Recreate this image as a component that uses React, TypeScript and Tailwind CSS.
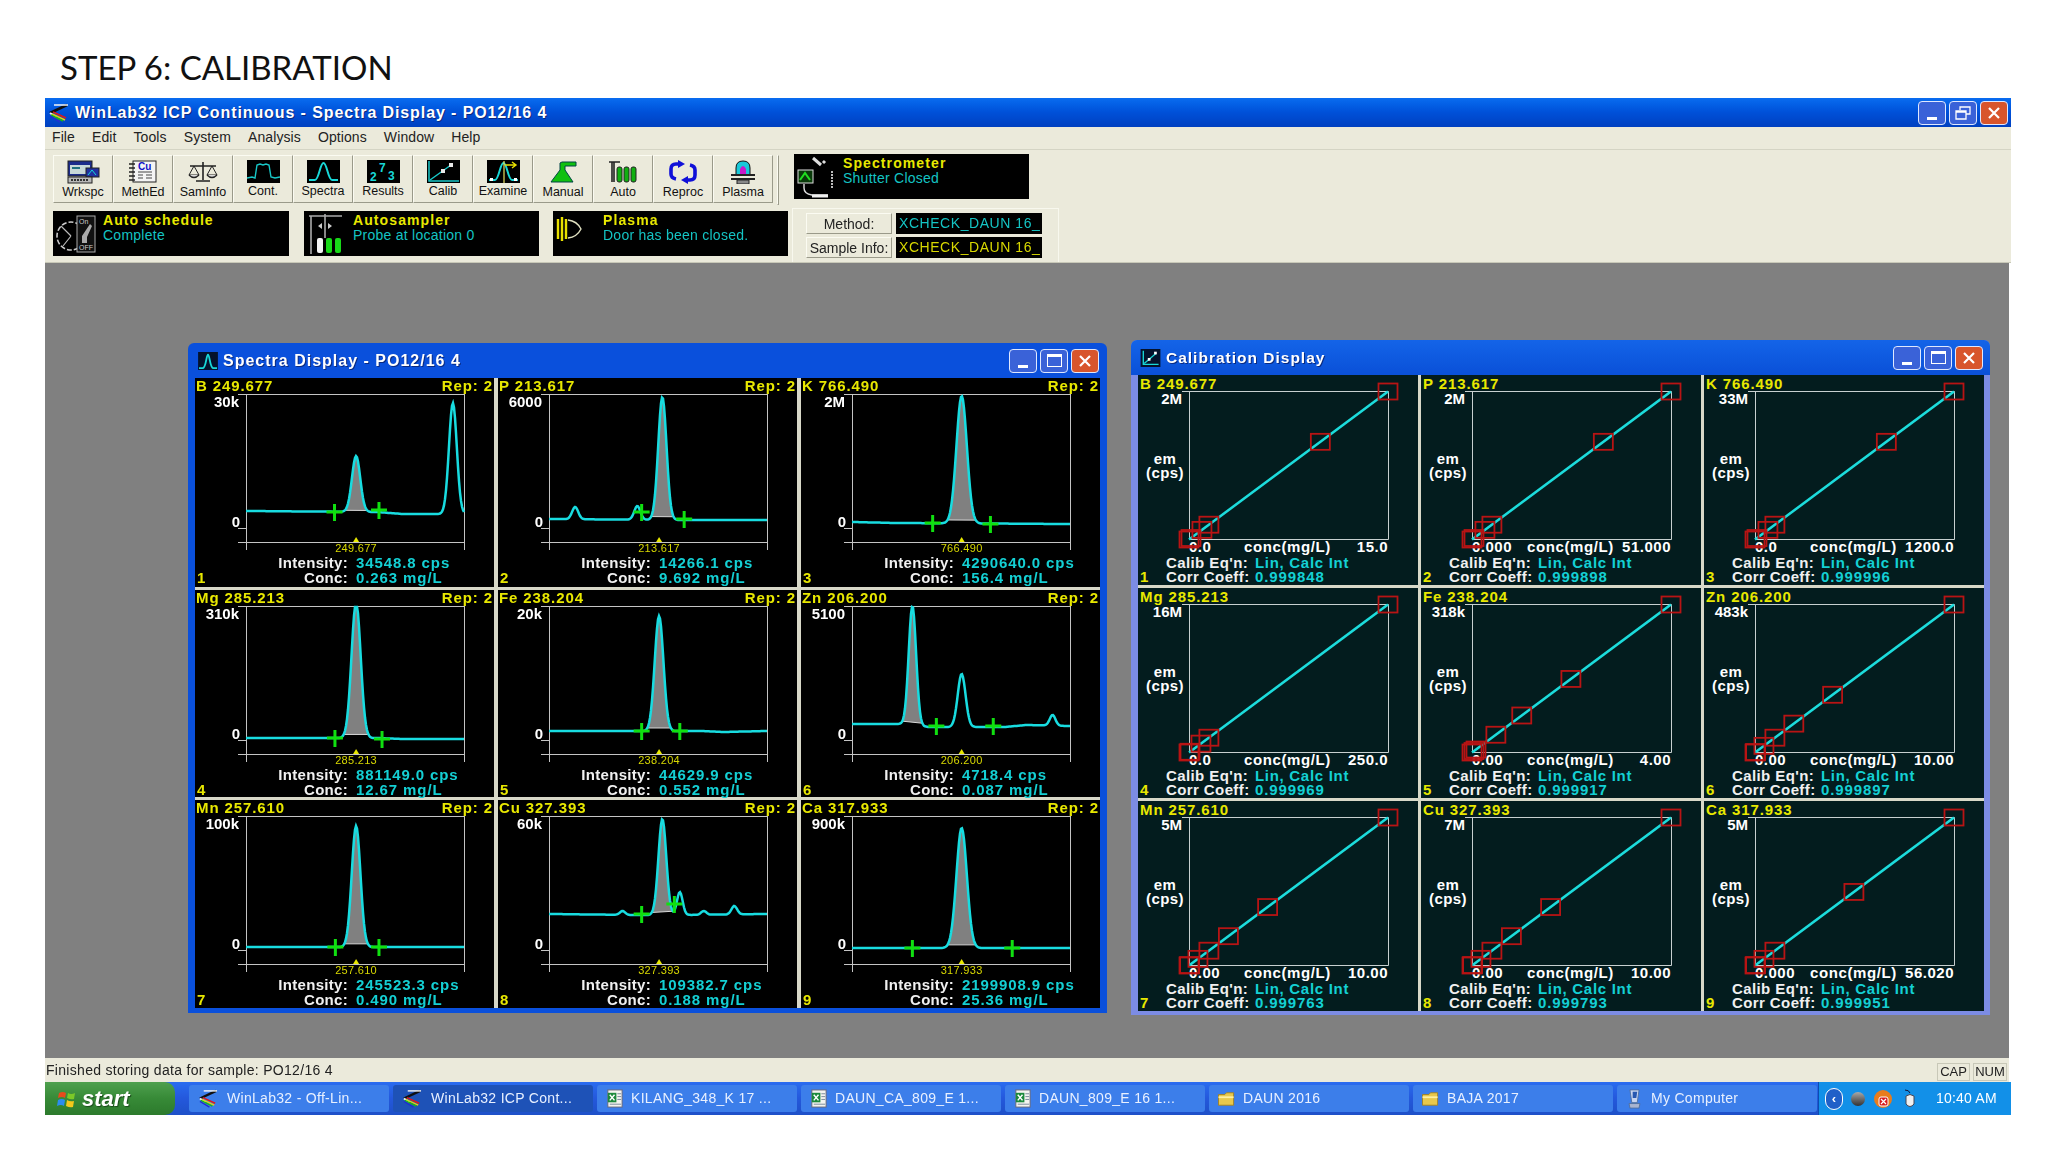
import type { ReactNode } from "react";

type Peak = [number, number, number];

type Spectrum = {
  name: string;
  num: number;
  top: string;
  wave: string;
  intensity: string;
  conc: string;
  mark: number;
  stops: [number, number][];
  peaks: Peak[];
  marks: [number, number][];
};

type Calib = {
  name: string;
  num: number;
  top: string;
  lo: string;
  hi: string;
  corr: string;
  points: number[];
};

const spectra: Spectrum[] = [
  { name: "B 249.677", num: 1, top: "30k", wave: "249.677", intensity: "34548.8 cps", conc: "0.263 mg/L", mark: 0.505, stops: [[0, 117], [0.6, 118], [0.72, 120], [0.9, 120], [1, 120]], peaks: [[0.505, 62, 0.019], [0.949, 9, 0.018]], marks: [[0.406, 118], [0.61, 116]] },
  { name: "P 213.617", num: 2, top: "6000", wave: "213.617", intensity: "14266.1 cps", conc: "9.692 mg/L", mark: 0.505, stops: [[0, 125], [0.6, 126], [1, 126]], peaks: [[0.52, 3, 0.019], [0.12, 113, 0.014], [0.405, 112, 0.014]], marks: [[0.425, 118], [0.62, 125]] },
  { name: "K 766.490", num: 3, top: "2M", wave: "766.490", intensity: "4290640.0 cps", conc: "156.4 mg/L", mark: 0.503, stops: [[0, 128], [0.2, 129], [1, 130]], peaks: [[0.503, 2, 0.024]], marks: [[0.37, 129], [0.635, 130]] },
  { name: "Mg 285.213", num: 4, top: "310k", wave: "285.213", intensity: "881149.0 cps", conc: "12.67 mg/L", mark: 0.505, stops: [[0, 132], [0.6, 132], [0.72, 133], [1, 133]], peaks: [[0.505, -4, 0.021]], marks: [[0.408, 132], [0.624, 133]] },
  { name: "Fe 238.204", num: 5, top: "20k", wave: "238.204", intensity: "44629.9 cps", conc: "0.552 mg/L", mark: 0.505, stops: [[0, 125], [0.7, 125], [0.8, 126], [1, 125]], peaks: [[0.505, 10, 0.02]], marks: [[0.425, 125], [0.6, 125]] },
  { name: "Zn 206.200", num: 6, top: "5100", wave: "206.200", intensity: "4718.4 cps", conc: "0.087 mg/L", mark: 0.503, stops: [[0, 118], [0.22, 118], [0.35, 121], [0.7, 121], [0.8, 119], [1, 120]], peaks: [[0.277, 0, 0.017], [0.503, 68, 0.018], [0.92, 109, 0.013]], marks: [[0.387, 120], [0.648, 120]] },
  { name: "Mn 257.610", num: 7, top: "100k", wave: "257.610", intensity: "245523.3 cps", conc: "0.490 mg/L", mark: 0.505, stops: [[0, 131], [1, 131]], peaks: [[0.505, 10, 0.02]], marks: [[0.41, 131], [0.61, 131]] },
  { name: "Cu 327.393", num: 8, top: "60k", wave: "327.393", intensity: "109382.7 cps", conc: "0.188 mg/L", mark: 0.505, stops: [[0, 98], [0.4, 99], [0.6, 99], [1, 98]], peaks: [[0.52, 3, 0.018], [0.6, 76, 0.013], [0.337, 95, 0.012], [0.71, 95, 0.012], [0.85, 90, 0.013]], marks: [[0.425, 98], [0.575, 88]] },
  { name: "Ca 317.933", num: 9, top: "900k", wave: "317.933", intensity: "2199908.9 cps", conc: "25.36 mg/L", mark: 0.503, stops: [[0, 132], [1, 132]], peaks: [[0.503, 12, 0.024]], marks: [[0.277, 132], [0.735, 132]] },
];

const calibrations: Calib[] = [
  { name: "B 249.677", num: 1, top: "2M", lo: "0.0", hi: "15.0", corr: "0.999848", points: [0, 0.01, 0.065, 0.1, 0.66, 1] },
  { name: "P 213.617", num: 2, top: "2M", lo: "0.000", hi: "51.000", corr: "0.999898", points: [0, 0.01, 0.065, 0.1, 0.66, 1] },
  { name: "K 766.490", num: 3, top: "33M", lo: "0.0", hi: "1200.0", corr: "0.999996", points: [0, 0.01, 0.065, 0.1, 0.66, 1] },
  { name: "Mg 285.213", num: 4, top: "16M", lo: "0.0", hi: "250.0", corr: "0.999969", points: [0, 0.005, 0.06, 0.1, 1] },
  { name: "Fe 238.204", num: 5, top: "318k", lo: "0.00", hi: "4.00", corr: "0.999917", points: [0, 0.01, 0.02, 0.12, 0.25, 0.497, 1] },
  { name: "Zn 206.200", num: 6, top: "483k", lo: "0.00", hi: "10.00", corr: "0.999897", points: [0, 0.003, 0.045, 0.1, 0.195, 0.39, 1] },
  { name: "Mn 257.610", num: 7, top: "5M", lo: "0.00", hi: "10.00", corr: "0.999763", points: [0, 0.003, 0.045, 0.1, 0.198, 0.395, 1] },
  { name: "Cu 327.393", num: 8, top: "7M", lo: "0.00", hi: "10.00", corr: "0.999793", points: [0, 0.003, 0.045, 0.1, 0.198, 0.395, 1] },
  { name: "Ca 317.933", num: 9, top: "5M", lo: "0.000", hi: "56.020", corr: "0.999951", points: [0, 0.003, 0.045, 0.1, 0.497, 1] },
];

const menus = ["File", "Edit", "Tools", "System", "Analysis", "Options", "Window", "Help"];

const raised = "border border-t-[#fbfbf2] border-l-[#fbfbf2] border-r-[#9a9a8a] border-b-[#9a9a8a]";

function WinLabLogo({ className }: { className?: string }) {
  return (
    <svg viewBox="0 0 24 20" className={className}>
      <path d="M3 10 L20 2" stroke="#101010" strokeWidth="2.5" fill="none" />
      <path d="M7 2 H21" stroke="#f4f4f4" strokeWidth="1.5" />
      <path d="M3 10 L9 14" stroke="#f4f4f4" strokeWidth="2" />
      <path d="M6 9 L19 15" stroke="#e01818" strokeWidth="1.5" />
      <path d="M5 11 L18 17" stroke="#e8d010" strokeWidth="1.5" />
      <path d="M4 12 L16 18" stroke="#18b818" strokeWidth="1.5" />
      <path d="M3 13 L13 19" stroke="#2030d0" strokeWidth="1.5" />
    </svg>
  );
}

function BlackIcon({ children }: { children: ReactNode }) {
  return (
    <svg viewBox="0 0 33 23" className="h-[23px] w-[33px]">
      <rect width="33" height="23" fill="#000" />
      {children}
    </svg>
  );
}

function SpectraGlyph() {
  return <path d="M2 20 H8 C12 20 13 3 16.5 3 C20 3 21 20 25 20 H31" stroke="#18d8d8" strokeWidth="2" fill="none" />;
}

function toolIcon(label: string): ReactNode {
  switch (label) {
    case "Wrkspc":
      return (
        <svg viewBox="0 0 34 24" className="h-6 w-[34px]">
          <rect x="2" y="1" width="24" height="15" fill="#1c2c8c" stroke="#222" />
          <rect x="4" y="5" width="20" height="9" fill="#c8d8d8" />
          <rect x="6" y="7" width="8" height="2" fill="#207080" />
          <rect x="20" y="8" width="13" height="9" fill="#2030a0" stroke="#222" />
          <path d="M22 15 L26 10 L30 15" stroke="#18d8d8" fill="none" />
          <rect x="2" y="17" width="24" height="6" fill="#b8b8b8" stroke="#222" />
          <path d="M5 20 H22" stroke="#333" strokeWidth="2" strokeDasharray="2 1" />
        </svg>
      );
    case "MethEd":
      return (
        <svg viewBox="0 0 34 24" className="h-6 w-[34px]">
          <rect x="7" y="1" width="23" height="21" fill="#f4f4f4" stroke="#222" />
          <path d="M3 4 H9 M3 8 H9 M3 12 H9 M3 16 H9 M3 20 H9" stroke="#222" strokeWidth="1.6" />
          <text x="12" y="10" className="fill-[#1010c8] text-[10px] font-bold">Cu</text>
          <path d="M12 12 H26 M12 15 H17 M20 15 H26 M12 18 H17 M20 18 H26" stroke="#444" strokeWidth="1.2" />
        </svg>
      );
    case "SamInfo":
      return (
        <svg viewBox="0 0 34 24" className="h-6 w-[34px]">
          <path d="M4 6 H30 M17 2 V20 M10 21 H24" stroke="#222" strokeWidth="1.6" fill="none" />
          <path d="M8 6 L3 15 H13 Z M26 6 L21 15 H31 Z" stroke="#222" fill="none" />
          <path d="M3 15 Q8 20 13 15 M21 15 Q26 20 31 15" stroke="#222" strokeWidth="1.4" fill="#ddd" />
        </svg>
      );
    case "Cont.":
      return (
        <BlackIcon>
          <path d="M0 18 L5 17 L8 18 L10 5 L13 4 L16 5 L19 4 L22 5 L24 17 L28 18 L33 17" stroke="#18c8c8" strokeWidth="1.4" fill="none" />
        </BlackIcon>
      );
    case "Spectra":
      return <BlackIcon><SpectraGlyph /></BlackIcon>;
    case "Results":
      return (
        <BlackIcon>
          <text x="3" y="21" className="fill-[#18d8d8] text-[12px] font-bold">2</text>
          <text x="12" y="12" className="fill-[#18d8d8] text-[12px] font-bold">7</text>
          <text x="21" y="20" className="fill-[#18d8d8] text-[12px] font-bold">3</text>
        </BlackIcon>
      );
    case "Calib":
      return (
        <BlackIcon>
          <path d="M2 1 V21 H32" stroke="#18c8c8" strokeWidth="1.5" fill="none" />
          <path d="M3 20 L24 5" stroke="#18c8c8" strokeWidth="1.5" />
          <rect x="14" y="9" width="4" height="4" fill="#e8e8e8" />
          <rect x="22" y="3" width="4" height="4" fill="#e8e8e8" />
        </BlackIcon>
      );
    case "Examine":
      return (
        <BlackIcon>
          <SpectraGlyph />
          <path d="M17 1 V23" stroke="#e8e060" strokeWidth="1.2" />
          <path d="M18 5 H28 M25 2 L29 5 L25 8" stroke="#e8e000" strokeWidth="1.4" fill="none" />
          <rect x="3" y="18" width="3" height="3" fill="#fff" />
          <rect x="27" y="18" width="3" height="3" fill="#fff" />
        </BlackIcon>
      );
    case "Manual":
      return (
        <svg viewBox="0 0 34 24" className="h-6 w-[34px]">
          <path d="M14 3 V10 L5 22 H27 L19 10 V6 H30 V2 H16 Z" fill="#10c010" stroke="#044" strokeWidth="1" />
        </svg>
      );
    case "Auto":
      return (
        <svg viewBox="0 0 34 24" className="h-6 w-[34px]">
          <path d="M3 2 H14 M6 2 V22 M8 2 V22" stroke="#222" strokeWidth="1.6" />
          <rect x="11" y="7" width="5" height="15" rx="2" fill="#10b010" stroke="#222" />
          <rect x="18" y="7" width="5" height="15" rx="2" fill="#10b010" stroke="#222" />
          <rect x="25" y="7" width="5" height="15" rx="2" fill="#10b010" stroke="#222" />
        </svg>
      );
    case "Reproc":
      return (
        <svg viewBox="0 0 34 24" className="h-6 w-[34px]">
          <path d="M13 4 H10 Q5 4 5 9 V14 Q5 18 10 19" stroke="#1010d8" strokeWidth="3.6" fill="none" />
          <path d="M21 20 H24 Q29 20 29 15 V10 Q29 6 24 5" stroke="#1010d8" strokeWidth="3.6" fill="none" />
          <path d="M12 0 L19 4 L12 8 Z M22 16 L15 20 L22 24 Z" fill="#1010d8" />
        </svg>
      );
    default:
      return (
        <svg viewBox="0 0 34 24" className="h-6 w-[34px]">
          <path d="M10 15 V8 Q10 1 17 1 Q24 1 24 8 V15 Z" fill="#18c8d8" stroke="#111" />
          <path d="M14 15 V9 Q17 3 20 9 V15 Z" fill="#c818c8" />
          <path d="M5 15 H29 M5 19 H29" stroke="#222" strokeWidth="2" />
          <rect x="11" y="20" width="12" height="4" fill="#888" stroke="#222" />
        </svg>
      );
  }
}

function ToolButton({ label }: { label: string }) {
  return (
    <div className={`flex h-12 w-[60px] flex-col items-center justify-start bg-[#ebeadb] pt-[4px] ${raised}`}>
      {toolIcon(label)}
      <span className="text-[12.5px] leading-[17px] text-[#111]">{label}</span>
    </div>
  );
}

function StatusPanel({ width, textLeft, icon, title, sub }: { width: string; textLeft: string; icon: ReactNode; title: string; sub: string }) {
  return (
    <div className={`flex h-[45px] shrink-0 bg-black pt-[1px] ${width}`}>
      <div className={`shrink-0 pl-[2px] ${textLeft}`}>{icon}</div>
      <div className="flex flex-col">
        <span className="text-[14px] font-bold leading-[16px] tracking-[1.1px] text-[#e8e800]">{title}</span>
        <span className="text-[14px] leading-[14px] tracking-[0.25px] text-[#14c4c4]">{sub}</span>
      </div>
    </div>
  );
}

function SchedIcon() {
  return (
    <svg viewBox="0 0 42 42" className="h-[42px] w-[42px]">
      <circle cx="16" cy="24" r="14" stroke="#ccc" strokeWidth="1.6" fill="none" strokeDasharray="5 2" />
      <path d="M16 24 L6 14 M16 24 L8 34" stroke="#bbb" strokeWidth="1.2" />
      <rect x="22" y="4" width="18" height="36" fill="#111" stroke="#aaa" />
      <path d="M27 24 L35 12 L37 14 L32 25 V31 H27 Z" fill="#aaa" />
      <text x="24" y="12" className="fill-[#ccc] text-[7px]">On</text>
      <text x="24" y="38" className="fill-[#ccc] text-[7px]">OFF</text>
    </svg>
  );
}

function SamplerIcon() {
  return (
    <svg viewBox="0 0 40 42" className="h-[42px] w-[40px]">
      <path d="M3 4 H36 M5 4 V42 M19 2 V26" stroke="#aaa" strokeWidth="1.6" />
      <path d="M12 14 L16 11 V17 Z M26 14 L22 11 V17 Z" fill="#ccc" />
      <rect x="11" y="26" width="6" height="15" rx="2" fill="#f2f2f2" />
      <rect x="20" y="26" width="6" height="15" rx="2" fill="#18d818" />
      <rect x="29" y="26" width="6" height="15" rx="2" fill="#18d818" />
    </svg>
  );
}

function PlasmaIcon() {
  return (
    <svg viewBox="0 0 30 30" className="mt-[2px] h-[30px] w-[30px]">
      <path d="M3 5 V25 M7 3 V27 M11 5 V25" stroke="#e8e000" strokeWidth="2.4" />
      <path d="M13 6 Q22 7 26 15 Q22 23 13 24" stroke="#e0e0c0" strokeWidth="1.4" fill="none" />
    </svg>
  );
}

function SpecIcon() {
  return (
    <svg viewBox="0 0 44 44" className="h-[44px] w-[44px]">
      <path d="M17 3 L25 10 M29 6 L27 8" stroke="#ddd" strokeWidth="3" />
      <rect x="2" y="15" width="15" height="13" fill="#0a3a0a" stroke="#ddd" />
      <path d="M4 25 L9 18 L14 25" stroke="#20e020" strokeWidth="2" fill="none" />
      <path d="M36 16 V34" stroke="#bbb" strokeWidth="2" strokeDasharray="2 1" />
      <path d="M8 29 V33 Q8 39 16 40 H32" stroke="#ddd" strokeWidth="1.4" fill="none" />
      <path d="M16 41 H32" stroke="#f0f0f0" strokeWidth="3" />
    </svg>
  );
}

function WindowButtons({ restore, className }: { restore?: boolean; className?: string }) {
  const btn = "flex h-6 w-7 items-center justify-center rounded-[4px] border border-[#dfe8ff]";
  return (
    <div className={`flex gap-[3px] ${className ?? ""}`}>
      <div className={`${btn} items-end bg-[#3a62d8] pb-[4px]`}>
        <div className="h-[3px] w-[10px] bg-white" />
      </div>
      <div className={`${btn} bg-[#3a62d8]`}>
        {restore ? (
          <svg viewBox="0 0 16 14" className="h-[14px] w-4">
            <path d="M5 4 V1 H15 V8 H11 M1 5 H11 V13 H1 Z M1 6 H11" stroke="#fff" strokeWidth="1.3" fill="none" />
          </svg>
        ) : (
          <div className="h-[13px] w-[15px] border border-t-[3px] border-white" />
        )}
      </div>
      <div className={`${btn} bg-[#d8552c]`}>
        <svg viewBox="0 0 14 14" className="h-[14px] w-[14px]">
          <path d="M2 2 L12 12 M12 2 L2 12" stroke="#fff" strokeWidth="2.2" />
        </svg>
      </div>
    </div>
  );
}

function SpectrumChart({ s }: { s: Spectrum }) {
  const left = 51;
  const width = 218;
  const baseAt = (f: number) => {
    for (let i = 1; i < s.stops.length; i++) {
      const [a, ya] = s.stops[i - 1];
      const [b, yb] = s.stops[i];
      if (f <= b) return ya + ((yb - ya) * (f - a)) / (b - a);
    }
    return s.stops[s.stops.length - 1][1];
  };
  const curveAt = (f: number) => {
    const base = baseAt(f);
    let y = base;
    for (const [mu, top, sigma] of s.peaks) {
      y -= (base - top) * Math.exp(-((f - mu) ** 2) / (2 * sigma * sigma));
    }
    return Math.max(1, y);
  };
  const pts: string[] = [];
  for (let i = 0; i <= width; i++) pts.push(`${left + i},${curveAt(i / width).toFixed(1)}`);

  const [mu, , sigma] = s.peaks[0];
  const from = mu - 2.7 * sigma;
  const to = mu + 2.7 * sigma;
  const fill: string[] = [];
  for (let f = from; f <= to; f += 0.004) fill.push(`${left + f * width},${curveAt(f).toFixed(1)}`);
  const x0 = left + from * width;
  const x1 = left + to * width;
  const y0 = curveAt(from);
  const y1 = curveAt(to);
  const markX = left + s.mark * width;

  return (
    <svg width="299" height="160" className="block overflow-visible">
      <path d={`M43 0.5 H269.5 M51.5 0 V156 M269.5 0 V156 M43 148.5 H269.5 M43 134.5 H51`} stroke="#c4c4c4" strokeWidth="1" fill="none" />
      <polygon points={`${x0},${y0} ${fill.join(" ")} ${x1},${y1}`} fill="#808080" />
      <path d={`M${x0} ${y0} L${x1} ${y1}`} stroke="#d8d8d8" strokeWidth="1" />
      <polyline points={pts.join(" ")} stroke="#18dce0" strokeWidth="2.5" fill="none" />
      {s.marks.map(([f, y]) => {
        const x = left + f * width;
        return <path key={f} d={`M${x - 8} ${y} H${x + 8} M${x} ${y - 8} V${y + 9}`} stroke="#10e010" strokeWidth="3" />;
      })}
      <path d={`M${markX - 3} 148 L${markX} 143 L${markX + 3} 148 Z`} fill="#e8e800" />
      <text x="44" y="13" textAnchor="end" className="fill-white text-[15px] font-bold">{s.top}</text>
      <text x="45" y="133" textAnchor="end" className="fill-white text-[15px] font-bold">0</text>
      <text x={markX} y="158" textAnchor="middle" className="fill-[#d8d800] text-[11px] tracking-[0.3px]">{s.wave}</text>
    </svg>
  );
}

function SpectrumCell({ s }: { s: Spectrum }) {
  return (
    <div className="flex min-w-0 flex-col bg-black">
      <div className="flex h-4 items-center justify-between px-[1px] text-[15px] font-bold leading-[18px] tracking-[0.9px] text-[#e8e800]">
        <span>{s.name}</span>
        <span>Rep: 2</span>
      </div>
      <SpectrumChart s={s} />
      <div className="grid grid-cols-[153px_auto] gap-x-2 pt-[1px] text-[15px] font-bold leading-[15px]">
        <span className="text-right tracking-[0.3px] text-[#f0f0f0]">Intensity:</span>
        <span className="tracking-[0.9px] text-[#14d0d4]">{s.intensity}</span>
        <span className="flex justify-between tracking-[0.3px] text-[#f0f0f0]">
          <span className="pl-[2px] text-[#e8e800]">{s.num}</span>
          <span>Conc:</span>
        </span>
        <span className="tracking-[0.9px] text-[#14d0d4]">{s.conc}</span>
      </div>
    </div>
  );
}

function CalibrationChart({ c }: { c: Calib }) {
  const left = 51;
  const right = 250;
  const top = 0.5;
  const bottom = 148.5;
  return (
    <svg width="280" height="164" className="block overflow-visible">
      <path d={`M44 ${top} H${right + 0.5} V${bottom} H${left + 0.5} V${top}`} stroke="#c8d0d0" strokeWidth="1" fill="none" />
      <path d={`M${left} ${bottom} L${right} ${top}`} stroke="#1cdcdc" strokeWidth="2.6" />
      <text x="44" y="13" textAnchor="end" className="fill-white text-[15px] font-bold">{c.top}</text>
      <text x="27" y="73" textAnchor="middle" className="fill-white text-[15px] font-bold tracking-[0.4px]">em</text>
      <text x="27" y="87" textAnchor="middle" className="fill-white text-[15px] font-bold tracking-[0.4px]">(cps)</text>
      <text x={left} y="161" className="fill-white text-[15px] font-bold tracking-[0.5px]">{c.lo}</text>
      <text x="106" y="161" className="fill-white text-[15px] font-bold tracking-[0.6px]">conc(mg/L)</text>
      <text x={right} y="161" textAnchor="end" className="fill-white text-[15px] font-bold tracking-[0.5px]">{c.hi}</text>
      {c.points.map((t) => {
        const cx = left + t * (right - left);
        const cy = bottom - t * (bottom - top);
        return <rect key={t} x={cx - 9.5} y={cy - 8} width="19" height="16" fill="none" stroke="#b81414" strokeWidth="1.8" />;
      })}
    </svg>
  );
}

function CalibrationCell({ c }: { c: Calib }) {
  return (
    <div className="flex min-w-0 flex-col bg-[#031c1e]">
      <div className="h-4 pl-[2px] text-[15px] font-bold leading-[18px] tracking-[0.9px] text-[#e8e800]">{c.name}</div>
      <CalibrationChart c={c} />
      <div className="grid grid-cols-[117px_auto] whitespace-nowrap pt-[1px] text-[15px] font-bold leading-[14px]">
        <span className="pl-7 tracking-[0.4px] text-[#f0f0f0]">Calib Eq'n:</span>
        <span className="tracking-[0.7px] text-[#14d0d4]">Lin, Calc Int</span>
        <span className="relative pl-7 tracking-[0.4px] text-[#f0f0f0]">
          <span className="absolute left-[2px] text-[#e8e800]">{c.num}</span>
          Corr Coeff:
        </span>
        <span className="tracking-[0.9px] text-[#14d0d4]">{c.corr}</span>
      </div>
    </div>
  );
}

function TaskIcon({ kind }: { kind: string }) {
  if (kind === "lab") return <WinLabLogo className="h-[19px] w-[23px] shrink-0" />;
  if (kind === "xls") {
    return (
      <svg viewBox="0 0 20 20" className="h-[19px] w-[19px] shrink-0">
        <rect x="3" y="1" width="15" height="18" fill="#f4f4f0" stroke="#667" />
        <rect x="3" y="4" width="9" height="10" fill="#1c8a3c" />
        <path d="M5 6 L10 12 M10 6 L5 12" stroke="#fff" strokeWidth="1.5" />
        <path d="M13 5 H17 M13 8 H17 M13 11 H17 M5 16 H17" stroke="#789" />
      </svg>
    );
  }
  if (kind === "dir") {
    return (
      <svg viewBox="0 0 20 18" className="h-4 w-[19px] shrink-0">
        <path d="M1 4 H8 L10 2 H18 V16 H1 Z" fill="#e8c84c" stroke="#a08020" />
        <path d="M1 7 H18" stroke="#fff0a0" strokeWidth="2" />
      </svg>
    );
  }
  return (
    <svg viewBox="0 0 20 22" className="h-5 w-[19px] shrink-0">
      <path d="M5 1 H15 L13 15 H7 Z" fill="#c8d4f0" stroke="#5070a0" />
      <path d="M8 3 H13 L12 10 H8 Z" fill="#2858b0" />
      <path d="M4 16 H16 L15 21 H5 Z" fill="#a8b4d0" stroke="#5070a0" />
    </svg>
  );
}

function TaskButton({ kind, label, active }: { kind: string; label: string; active?: boolean }) {
  return (
    <div className={`flex h-[27px] w-[200px] shrink-0 items-center gap-[7px] rounded-[3px] pl-2 text-[14px] tracking-[0.3px] text-[#e8f0ff] ${active ? "bg-[#1e52b7]" : "bg-[#3c7eea]"}`}>
      <TaskIcon kind={kind} />
      <span className="whitespace-nowrap">{label}</span>
    </div>
  );
}

export default function App() {
  return (
    <div className="h-[1152px] w-[2048px] overflow-hidden bg-white [font-family:'Liberation_Sans',Arial,sans-serif]">
      <h1 className="h-[98px] pl-[60px] pt-[45px] text-[33px] font-normal leading-[44px] text-[#111] [font-family:Lato,sans-serif]">
        STEP 6: CALIBRATION
      </h1>

      <div className="ml-[45px] flex w-[1966px] flex-col [filter:blur(0.35px)]">
        {/* main title bar */}
        <div className="flex h-[29px] items-center justify-between bg-gradient-to-b from-[#0a6cf0] via-[#0050d8] to-[#0040c0] pl-[2px] pr-[3px]">
          <div className="flex items-center gap-[4px]">
            <WinLabLogo className="h-5 w-6" />
            <span className="text-[16px] font-bold tracking-[0.9px] text-white [text-shadow:1px_1px_0_#0a2a80]">
              WinLab32 ICP Continuous - Spectra Display - PO12/16 4
            </span>
          </div>
          <WindowButtons restore />
        </div>

        {/* menu */}
        <div className="flex h-[23px] items-center gap-[17px] border-b border-[#d4d4c4] bg-[#ebeadb] pb-[2px] pl-[7px] text-[14px] tracking-[0.1px] text-[#222]">
          {menus.map((m) => (
            <span key={m}>{m}</span>
          ))}
        </div>

        {/* toolbar */}
        <div className="flex h-[58px] items-start bg-[#ebeadb] pl-2 pt-[5px]">
          {["Wrkspc", "MethEd", "SamInfo", "Cont.", "Spectra", "Results", "Calib", "Examine", "Manual", "Auto", "Reproc", "Plasma"].map((t) => (
            <ToolButton key={t} label={t} />
          ))}
          <div className={`ml-[4px] h-[50px] w-[2px] ${raised}`} />
          <div className="-mt-[1px] ml-[15px]">
            <StatusPanel width="w-[235px]" textLeft="w-[49px]" icon={<SpecIcon />} title="Spectrometer" sub="Shutter Closed" />
          </div>
        </div>

        {/* second row */}
        <div className="flex h-[55px] items-start border-b border-[#c8c8b8] bg-[#ebeadb] pl-2 pt-[3px]">
          <StatusPanel width="w-[236px]" textLeft="w-[50px]" icon={<SchedIcon />} title="Auto schedule" sub="Complete" />
          <div className="ml-[15px]">
            <StatusPanel width="w-[235px]" textLeft="w-[49px]" icon={<SamplerIcon />} title="Autosampler" sub="Probe at location 0" />
          </div>
          <div className="ml-[14px]">
            <StatusPanel width="w-[235px]" textLeft="w-[50px]" icon={<PlasmaIcon />} title="Plasma" sub="Door has been closed." />
          </div>
          <div className="-mt-[3px] ml-[4px] h-[54px] w-[267px] border-x border-t border-[#f8f8ee] pl-[13px] pt-[4px]">
            <div className="grid grid-cols-[86px_146px] gap-x-1 gap-y-[3px] text-[14px] leading-[20px]">
              <div className={`h-[21px] bg-[#ebeadb] text-center text-[#222] ${raised}`}>Method:</div>
              <div className="h-[21px] whitespace-nowrap bg-black pl-[3px] tracking-[0.55px] text-[#14c4c4]">XCHECK_DAUN 16_</div>
              <div className={`h-[21px] bg-[#ebeadb] text-center text-[#222] ${raised}`}>Sample Info:</div>
              <div className="h-[21px] whitespace-nowrap bg-black pl-[3px] tracking-[0.55px] text-[#d8d800]">XCHECK_DAUN 16_</div>
            </div>
          </div>
        </div>

        {/* desktop with child windows */}
        <div className="relative h-[795px] w-[1964px] bg-[#808080]">
          <section className="absolute left-[143px] top-[80px] flex h-[670px] w-[919px] flex-col rounded-t-[6px] bg-[#0a50dc] px-[7px]">
            <div className="flex h-[35px] shrink-0 items-center justify-between pl-[2px] pr-[1px]">
              <div className="flex items-center gap-[4px]">
                <svg viewBox="0 0 22 20" className="h-[18px] w-[22px]">
                  <rect width="22" height="20" fill="#04122c" />
                  <path d="M1 18 H5 C9 18 9 3 11 3 C13 3 13 18 17 18 H21" stroke="#18d8d8" strokeWidth="2" fill="none" />
                </svg>
                <span className="text-[16px] font-bold tracking-[1px] text-white [text-shadow:1px_1px_0_#0a2a80]">Spectra Display - PO12/16 4</span>
              </div>
              <WindowButtons />
            </div>
            <div className="grid grid-cols-[299px_299px_299px] grid-rows-[209px_207px_208px] gap-x-1 gap-y-[3px] bg-[#d8d8c8]">
              {spectra.map((s) => (
                <SpectrumCell key={s.num} s={s} />
              ))}
            </div>
          </section>

          <section className="absolute left-[1086px] top-[77px] flex h-[675px] w-[859px] flex-col rounded-t-[6px] bg-[#7c8ce4] pl-[7px] pr-[6px]">
            <div className="-ml-[7px] -mr-[6px] flex h-[35px] shrink-0 items-center justify-between rounded-t-[6px] bg-gradient-to-b from-[#1464e8] to-[#0a50d8] pl-[9px] pr-[7px]">
              <div className="flex items-center gap-[5px]">
                <svg viewBox="0 0 22 20" className="h-[18px] w-[21px]">
                  <rect width="22" height="20" fill="#04122c" />
                  <path d="M3 2 V17 H20" stroke="#18d8d8" strokeWidth="1.5" fill="none" />
                  <path d="M4 16 L17 5" stroke="#18d8d8" strokeWidth="1.4" />
                  <rect x="8" y="10" width="3" height="3" fill="#fff" />
                  <rect x="15" y="3" width="3" height="3" fill="#fff" />
                </svg>
                <span className="text-[15.5px] font-bold tracking-[1px] text-white [text-shadow:1px_1px_0_#0a2a80]">Calibration Display</span>
              </div>
              <WindowButtons />
            </div>
            <div className="grid grid-cols-[280px_280px_280px] grid-rows-[210px_210px_210px] gap-[3px] bg-[#d8d8c8]">
              {calibrations.map((c) => (
                <CalibrationCell key={c.num} c={c} />
              ))}
            </div>
          </section>
        </div>

        {/* status bar */}
        <div className="flex h-[24px] w-[1964px] items-end justify-between bg-[#ebeadb] pb-[1px] pl-[1px] text-[14px] tracking-[0.3px] text-[#222]">
          <span>Finished storing data for sample: PO12/16 4</span>
          <div className="mr-[2px] flex gap-[3px] text-[13px] leading-[18px] tracking-normal">
            <span className="flex h-[18px] w-[33px] items-center justify-center border border-[#c8c8b8]">CAP</span>
            <span className="flex h-[18px] w-[34px] items-center justify-center border border-[#c8c8b8]">NUM</span>
          </div>
        </div>

        {/* taskbar */}
        <div className="flex h-[33px] items-center bg-gradient-to-b from-[#2a6cf0] via-[#2458dc] to-[#1e50c8]">
          <div className="flex h-full w-[130px] shrink-0 items-center gap-[5px] rounded-r-[10px] bg-gradient-to-b from-[#4ea04e] via-[#378a37] to-[#2c7a2c] pl-[12px]">
            <svg viewBox="0 0 20 20" className="h-5 w-5">
              <path d="M2 4 Q6 2 9 4 L8 9 Q5 7 1 9 Z" fill="#e84a1c" />
              <path d="M11 4 Q14 6 18 4 L17 10 Q14 11 10 9 Z" fill="#7cc828" />
              <path d="M1 11 Q5 9 8 11 L7 17 Q4 15 0 17 Z" fill="#2c8cf0" />
              <path d="M10 11 Q13 13 17 12 L16 18 Q13 19 9 17 Z" fill="#f4c81c" />
            </svg>
            <span className="text-[22px] font-bold italic leading-none text-white [text-shadow:1px_1px_1px_#1a4a1a]">start</span>
          </div>
          <div className="ml-[14px] flex gap-1">
            <TaskButton kind="lab" label="WinLab32 - Off-Lin..." />
            <TaskButton kind="lab" label="WinLab32 ICP Cont..." active />
            <TaskButton kind="xls" label="KILANG_348_K 17 ..." />
            <TaskButton kind="xls" label="DAUN_CA_809_E 1..." />
            <TaskButton kind="xls" label="DAUN_809_E 16 1..." />
            <TaskButton kind="dir" label="DAUN 2016" />
            <TaskButton kind="dir" label="BAJA 2017" />
            <TaskButton kind="pc" label="My Computer" />
          </div>
          <div className="ml-[1px] flex h-full flex-1 items-center gap-[8px] border-l border-[#0c4cb0] bg-[#1290e8] pl-[6px] text-[14px] text-white">
            <div className="flex h-[22px] w-[18px] items-center justify-center rounded-full border border-white bg-[#2060c8] text-[13px] font-bold leading-none">‹</div>
            <div className="h-[14px] w-[14px] rounded-full bg-gradient-to-b from-[#aaaaaa] to-[#333333]" />
            <svg viewBox="0 0 20 20" className="h-5 w-5">
              <circle cx="10" cy="10" r="9" fill="#e87c1c" />
              <rect x="6" y="8" width="9" height="9" rx="2" fill="#d81c1c" stroke="#fff" />
              <path d="M8 10 L13 15 M13 10 L8 15" stroke="#fff" strokeWidth="1.2" />
            </svg>
            <svg viewBox="0 0 18 22" className="h-[22px] w-[18px]">
              <path d="M5 8 Q9 5 13 8 V16 Q9 21 5 16 Z" fill="#f0f0f0" stroke="#445" />
              <path d="M9 5 Q8 2 4 2" stroke="#113" fill="none" />
            </svg>
            <span className="ml-[9px] tracking-[0.2px]">10:40 AM</span>
          </div>
        </div>
      </div>
    </div>
  );
}
